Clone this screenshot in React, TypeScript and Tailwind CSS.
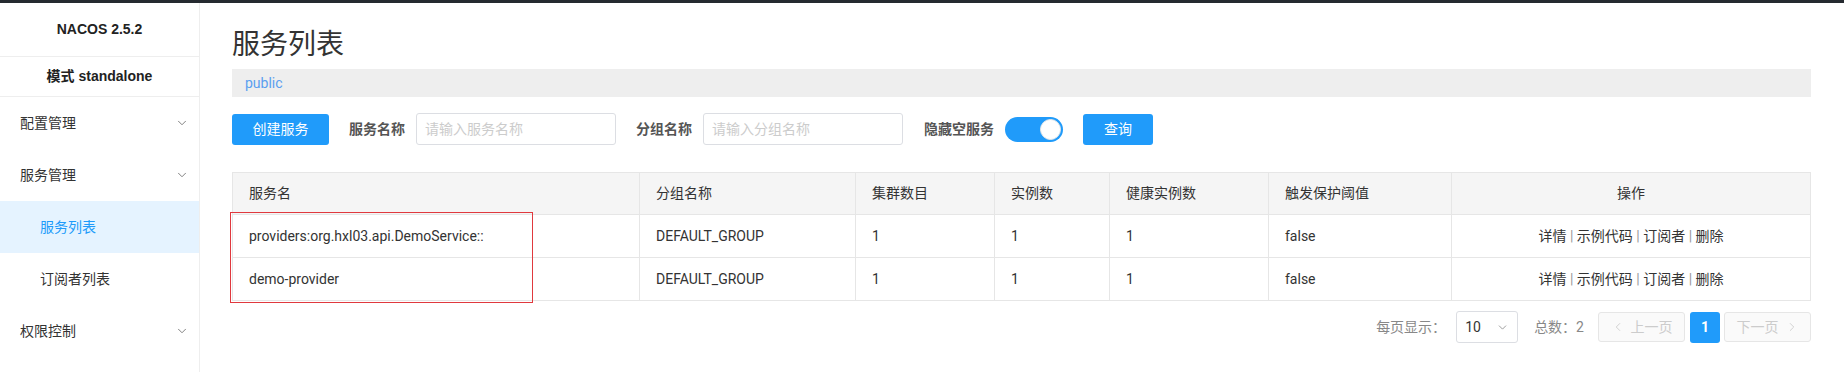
import { ChevronDown, ChevronLeft, ChevronRight } from "lucide-react";

const font = "font-['Roboto','Noto_Sans_CJK_SC',sans-serif]";

const rows = [
  { name: "providers:org.hxl03.api.DemoService::", group: "DEFAULT_GROUP" },
  { name: "demo-provider", group: "DEFAULT_GROUP" },
];

function MenuItem({ label, sub, active }: { label: string; sub?: boolean; active?: boolean }) {
  return (
    <div
      className={`flex h-[52px] items-center justify-between pr-[10px] text-[14px] ${
        sub ? "pl-[40px]" : "pl-[20px]"
      } ${active ? "bg-[#e5f3ff] text-[#209bfa]" : "text-[#333]"}`}
    >
      <span>{label}</span>
      {!sub && <ChevronDown size={14} strokeWidth={1.4} className="text-[#666]" />}
    </div>
  );
}

function Sidebar() {
  return (
    <aside className="w-[200px] shrink-0 border-r border-[#eee]">
      <div className="flex h-[54px] items-center justify-center border-b border-[#eee] font-['Liberation_Sans','Noto_Sans_CJK_SC',sans-serif] text-[14px] font-bold text-[#222]">
        NACOS 2.5.2
      </div>
      <div className="flex h-[40px] items-center justify-center border-b border-[#eee] font-['Liberation_Sans','Noto_Sans_CJK_SC',sans-serif] text-[14px] font-bold text-[#222]">
        模式 standalone
      </div>
      <MenuItem label="配置管理" />
      <MenuItem label="服务管理" />
      <MenuItem label="服务列表" sub active />
      <MenuItem label="订阅者列表" sub />
      <MenuItem label="权限控制" />
    </aside>
  );
}

function Toolbar() {
  return (
    <div className="mt-[16px] flex h-[32px] items-center text-[14px]">
      <button className="h-[31px] w-[97px] rounded-[3px] bg-[#209bfa] text-white">创建服务</button>
      <span className="ml-[20px] font-bold text-[#555]">服务名称</span>
      <input
        placeholder="请输入服务名称"
        className="ml-[11px] h-[32px] w-[200px] rounded-[3px] border border-[#dcdee3] px-[8px] text-[14px] placeholder:text-[#ccc]"
      />
      <span className="ml-[20px] font-bold text-[#555]">分组名称</span>
      <input
        placeholder="请输入分组名称"
        className="ml-[11px] h-[32px] w-[200px] rounded-[3px] border border-[#dcdee3] px-[8px] text-[14px] placeholder:text-[#ccc]"
      />
      <span className="ml-[21px] font-bold text-[#555]">隐藏空服务</span>
      <div className="ml-[11px] flex h-[25px] w-[58px] items-center justify-end rounded-full bg-[#209bfa] pr-[2px]">
        <div className="h-[21px] w-[21px] rounded-full border border-[#e8e8e8] bg-white" />
      </div>
      <button className="ml-[20px] h-[31px] w-[70px] rounded-[3px] bg-[#209bfa] text-white">查询</button>
    </div>
  );
}

function Table() {
  const th = "h-[42px] border border-[#e6e6e6] px-[16px] font-normal text-[#333]";
  const td = "h-[43px] border border-[#e6e6e6] px-[16px] text-[#333]";
  return (
    <div className="relative mt-[27px]">
      <table className="w-full table-fixed border-collapse text-[14px]">
        <colgroup>
          <col className="w-[407px]" />
          <col className="w-[216px]" />
          <col className="w-[139px]" />
          <col className="w-[115px]" />
          <col className="w-[159px]" />
          <col className="w-[183px]" />
          <col />
        </colgroup>
        <thead className="bg-[#f5f5f5]">
          <tr>
            <th className={`${th} text-left`}>服务名</th>
            <th className={`${th} text-left`}>分组名称</th>
            <th className={`${th} text-left`}>集群数目</th>
            <th className={`${th} text-left`}>实例数</th>
            <th className={`${th} text-left`}>健康实例数</th>
            <th className={`${th} text-left`}>触发保护阈值</th>
            <th className={`${th} text-center`}>操作</th>
          </tr>
        </thead>
        <tbody>
          {rows.map((r) => (
            <tr key={r.name}>
              <td className={td}>{r.name}</td>
              <td className={td}>{r.group}</td>
              <td className={td}>1</td>
              <td className={td}>1</td>
              <td className={td}>1</td>
              <td className={td}>false</td>
              <td className={`${td} text-center text-[#1f6fd6]`}>
                详情 <span className="text-[#999]">|</span> 示例代码{" "}
                <span className="text-[#999]">|</span> 订阅者 <span className="text-[#999]">|</span> 删除
              </td>
            </tr>
          ))}
        </tbody>
      </table>
      <div className="pointer-events-none absolute left-[-2px] top-[40px] h-[91px] w-[303px] border border-[#e0393e]" />
    </div>
  );
}

function Pagination() {
  return (
    <div className="mt-[10px] flex h-[32px] items-center justify-end text-[14px] text-[#888]">
      <span>每页显示：</span>
      <div className="ml-[10px] flex h-[32px] w-[62px] items-center justify-between rounded-[3px] border border-[#dcdee3] pl-[8px] pr-[8px] text-[#333]">
        <span>10</span>
        <ChevronDown size={13} strokeWidth={1.5} className="text-[#888]" />
      </div>
      <span className="ml-[16px]">总数：2</span>
      <div className="ml-[14px] flex h-[30px] w-[87px] items-center justify-center gap-[6px] rounded-[3px] border border-[#e6e6e6] bg-[#fafafa] text-[#ccc]">
        <ChevronLeft size={14} strokeWidth={1.5} />
        <span>上一页</span>
      </div>
      <div className="ml-[5px] flex h-[31px] w-[30px] items-center justify-center rounded-[3px] bg-[#209bfa] font-bold text-white">
        1
      </div>
      <div className="ml-[4px] flex h-[30px] w-[87px] items-center justify-center gap-[6px] rounded-[3px] border border-[#e6e6e6] bg-[#fafafa] text-[#ccc]">
        <span>下一页</span>
        <ChevronRight size={14} strokeWidth={1.5} />
      </div>
    </div>
  );
}

export default function App() {
  return (
    <div className={`h-[372px] w-[1844px] overflow-hidden bg-white ${font}`}>
      <div className="h-[3px] bg-[#252a30]" />
      <div className="flex h-[369px]">
        <Sidebar />
        <main className="flex-1 pl-[32px] pr-[33px]">
          <h1 className="mt-[24px] h-[36px] text-[28px] leading-[36px] font-normal text-[#333]">服务列表</h1>
          <div className="mt-[6px] flex h-[28px] items-center bg-[#eee] pl-[13px] text-[14px] text-[#5aa0f0]">
            public
          </div>
          <Toolbar />
          <Table />
          <Pagination />
        </main>
      </div>
    </div>
  );
}
